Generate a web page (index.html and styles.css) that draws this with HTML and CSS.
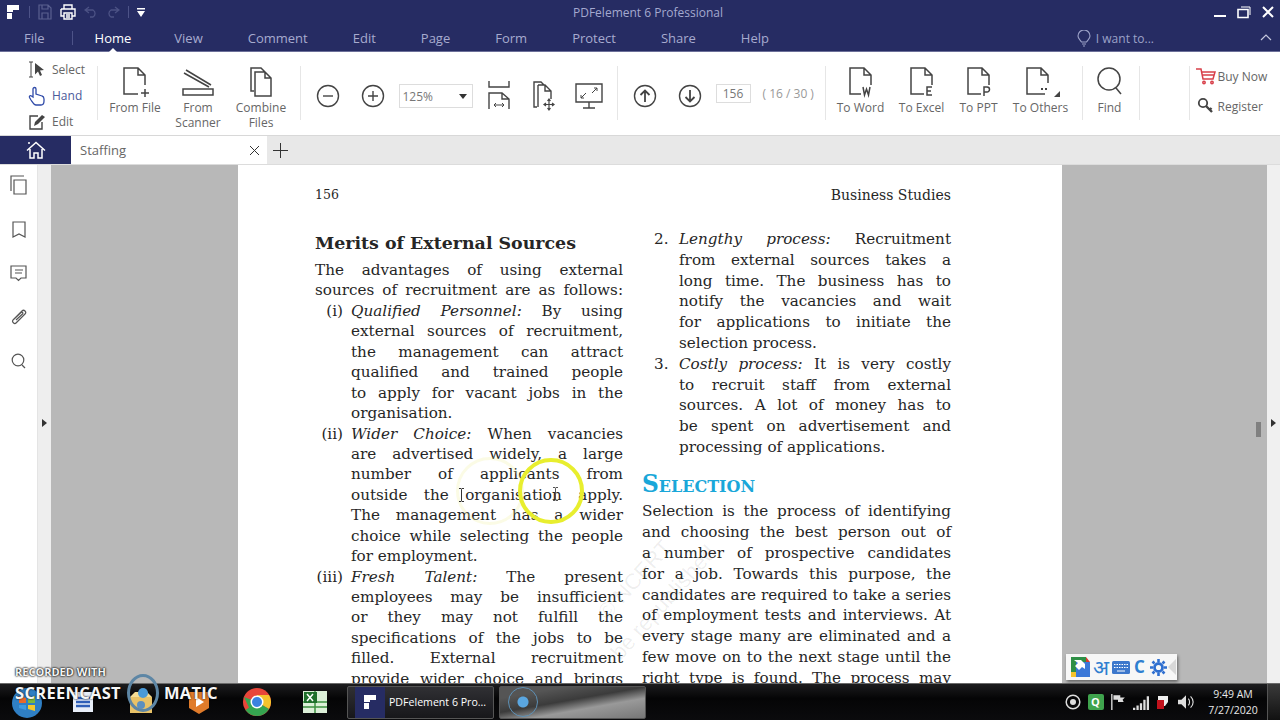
FILE: index.html
```html
<!DOCTYPE html>
<html lang="en">
<head>
<meta charset="utf-8">
<title>PDFelement 6 Professional</title>
<link rel="stylesheet" href="styles.css">
</head>
<body>
<div class="app">
  <header class="titlebar">
    <div class="qa">
      <svg class="qa-logo" width="12" height="14" viewBox="0 0 12 14"><path fill="#fff" d="M0 0h12v5H6v2H0zM0 8h5v6H0z"/></svg>
      <span class="qa-sep"></span>
      <svg class="qa-i" width="14" height="16" viewBox="0 0 14 16" fill="none" stroke="#5a6090" stroke-width="1.2"><path d="M1 1h9l3 3v11H1zM4 1v4h6V1M4 15v-6h6v6"/></svg>
      <svg class="qa-i" width="16" height="16" viewBox="0 0 16 16" fill="none" stroke="#fff" stroke-width="1.4"><path d="M4 5V1h8v4M1 5h14v7h-3M4 12H1V5M4 9h8v6H4zM6 11h4M6 13h4"/></svg>
      <svg class="qa-i" width="14" height="12" viewBox="0 0 14 12" fill="none" stroke="#4c5285" stroke-width="1.3"><path d="M5 1 1 4l4 3M1 4h8a4 4 0 0 1 0 7H6"/></svg>
      <svg class="qa-i" width="14" height="12" viewBox="0 0 14 12" fill="none" stroke="#4c5285" stroke-width="1.3"><path d="m9 1 4 3-4 3M13 4H5a4 4 0 0 0 0 7h3"/></svg>
      <span class="qa-sep"></span>
      <svg class="qa-i" width="8" height="9" viewBox="0 0 8 9"><path fill="#fff" d="M0 0h8v1.500H0zM0 3h8L4 9z"/></svg>
    </div>
    <div class="app-title">PDFelement 6 Professional</div>
    <div class="win">
      <svg width="12" height="12" viewBox="0 0 12 12"><path stroke="#fff" stroke-width="2" d="M0 10h12"/></svg>
      <svg width="14" height="14" viewBox="0 0 14 14" fill="none" stroke="#fff"><path stroke-width="1.600" d="M1 4.500h10v8H1z"/><path d="M4 2h9v8"/></svg>
      <svg width="12" height="12" viewBox="0 0 12 12"><path stroke="#fff" stroke-width="2" d="m1 1 10 10M11 1 1 11"/></svg>
    </div>
  </header>
  <nav class="menubar">
    <a class="m">File</a><span class="m-sep"></span>
    <a class="m m-on">Home</a><a class="m">View</a><a class="m">Comment</a><a class="m">Edit</a><a class="m">Page</a><a class="m">Form</a><a class="m">Protect</a><a class="m">Share</a><a class="m">Help</a>
    <div class="want">
      <svg width="14" height="17" viewBox="0 0 14 17" fill="none" stroke="#9ca2c8" stroke-width="1.100"><path d="M4.500 12C3 9.500 1 8.500 1 6a6 6 0 0 1 12 0c0 2.500-2 3.500-3.500 6zM5 14h4M6 16h2"/></svg>
      <span>I want to...</span>
    </div>
    <svg class="chev" width="12" height="7" viewBox="0 0 12 7" fill="none" stroke="#c5c8de" stroke-width="1.200"><path d="m1 6 5-5 5 5"/></svg>
  </nav>

  <section class="ribbon">
    <div class="tools">
      <div class="tool"><svg width="18" height="18" viewBox="0 0 18 18"><path fill="none" stroke="#444" d="M1 1h4M3 1v15M1 16h4"/><path fill="#444" d="m7 2 9 7-4 .5 2 4.500-2 1-2-4.500-3 3z"/></svg><span>Select</span></div>
      <div class="tool tool-on"><svg width="18" height="20" viewBox="0 0 18 20" fill="none" stroke="#2f4aa8" stroke-width="1.300"><path d="M5 11V3a1.500 1.500 0 0 1 3 0v5l6 2c2 .5 2 2 2 3v2c0 2-1 4-3 4H8c-2 0-3-2-5-5l-1.500-2.500c-.5-1.500 1-2.500 2-1.500z"/></svg><span>Hand</span></div>
      <div class="tool"><svg width="18" height="18" viewBox="0 0 18 18" fill="none" stroke="#444" stroke-width="1.400"><path d="M14 9v7H2V3h8"/><path fill="#444" stroke="none" d="m6 13 1-4 7-7 3 2-7 7z"/></svg><span>Edit</span></div>
    </div>
    <span class="sep"></span>
    <div class="grp grp-files">
      <div class="big w63"><svg width="28" height="32" viewBox="0 0 28 32" fill="none" stroke="#444" stroke-width="1.500"><path d="M17 28H3V2h14l7 7v10M17 2v7h7M20 27h8M24 23v8"/></svg><span>From File</span></div>
      <div class="big w63"><svg width="34" height="32" viewBox="0 0 34 32" fill="none" stroke="#444" stroke-width="1.500"><path d="m5 4 25 15M3 7l25 14M2 23h30v6H2z"/></svg><span>From Scanner</span></div>
      <div class="big w63"><svg width="24" height="32" viewBox="0 0 24 32" fill="none" stroke="#444" stroke-width="1.500"><path d="M5 25H2V2h10l4 4M6 6h10l6 6v18H6zM16 6v6h6"/></svg><span>Combine Files</span></div>
    </div>
    <span class="sep"></span>
    <div class="grp grp-view">
      <div class="ib"><svg width="24" height="24" viewBox="0 0 24 24" fill="none" stroke="#444" stroke-width="1.400"><circle cx="12" cy="12" r="10.500"/><path d="M7 12h10"/></svg></div>
      <div class="ib"><svg width="24" height="24" viewBox="0 0 24 24" fill="none" stroke="#444" stroke-width="1.400"><circle cx="12" cy="12" r="10.500"/><path d="M7 12h10M12 7v10"/></svg></div>
      <div class="zoomsel"><span>125%</span><i class="caret"></i></div>
      <div class="ib"><svg width="24" height="30" viewBox="0 0 24 30" fill="none" stroke="#444" stroke-width="1.400"><path d="M2 0v6h20V0M2 28V12h13l7 6v10M15 12v6h7"/><path stroke-width="1" d="M7 24h10M9 22l-2 2 2 2M15 22l2 2-2 2"/></svg></div>
      <div class="ib"><svg width="24" height="30" viewBox="0 0 24 30" fill="none" stroke="#444" stroke-width="1.400"><path d="M5 26H2V1h7l3 3M6 4h7l6 6v8M6 4v22M13 4v6h6"/><path stroke-width="1.200" d="M17 18v11M11.500 23.500h11M15.500 20l1.500-2 1.500 2M15.500 27l1.500 2 1.500-2M14 22l-2 1.500 2 1.500M20 22l2 1.500-2 1.500"/></svg></div>
      <div class="ib"><svg width="28" height="28" viewBox="0 0 28 28" fill="none" stroke="#444" stroke-width="1.400"><path d="M1 2h26v18H1zM14 20v6M8 26h12"/><path stroke-width="1" d="m6 16 5-5M6 13v3h3M22 6l-5 5M19 6h3v3"/></svg></div>
    </div>
    <span class="sep"></span>
    <div class="grp grp-nav">
      <div class="ib"><svg width="24" height="24" viewBox="0 0 24 24" fill="none" stroke="#444" stroke-width="1.400"><circle cx="12" cy="12" r="10.500"/><path stroke-width="1.800" d="M12 18V7M7.500 11 12 6.500l4.500 4.500"/></svg></div>
      <div class="ib"><svg width="24" height="24" viewBox="0 0 24 24" fill="none" stroke="#444" stroke-width="1.400"><circle cx="12" cy="12" r="10.500"/><path stroke-width="1.800" d="M12 6v11M7.500 13l4.500 4.500 4.500-4.500"/></svg></div>
      <div class="pageinp">156</div>
      <div class="pagecount">( 16 / 30 )</div>
    </div>
    <span class="sep"></span>
    <div class="grp grp-conv">
      <div class="big w68"><svg width="28" height="32" viewBox="0 0 28 32" fill="none" stroke="#444" stroke-width="1.500"><path d="M14 28H3V2h14l7 7v10M17 2v7h7"/><path stroke-width="1.500" d="m16 21 1.500 8 2-6 2 6 1.500-8"/></svg><span>To Word</span></div>
      <div class="big w54"><svg width="28" height="32" viewBox="0 0 28 32" fill="none" stroke="#444" stroke-width="1.500"><path d="M16 28H3V2h14l7 7v10M17 2v7h7"/><path stroke-width="1.500" d="M24 21h-5v8h5M19 25h4"/></svg><span>To Excel</span></div>
      <div class="big w60"><svg width="28" height="32" viewBox="0 0 28 32" fill="none" stroke="#444" stroke-width="1.500"><path d="M16 28H3V2h14l7 7v10M17 2v7h7"/><path stroke-width="1.500" d="M19 30v-9h3a2.500 2.500 0 0 1 0 5h-3"/></svg><span>To PPT</span></div>
      <div class="big w64"><svg width="40" height="32" viewBox="0 0 40 32" fill="none" stroke="#444" stroke-width="1.500"><path d="M24 28H6V2h14l7 7v8M20 2v7h7"/><path stroke-width="2" stroke-dasharray="2 2" d="M20 23h8"/><path fill="#444" stroke="none" d="M39 25v6h-6z"/></svg><span>To Others</span></div>
    </div>
    <span class="sep"></span>
    <div class="big w54 find"><svg width="28" height="32" viewBox="0 0 28 32" fill="none" stroke="#444" stroke-width="1.500"><circle cx="13" cy="13" r="11"/><path d="m20 22 5 6"/></svg><span>Find</span></div>
    <span class="sep sep-find"></span>
    <span class="sep sep-buy"></span>
    <div class="buy">
      <div class="buy-row"><svg width="20" height="17" viewBox="0 0 20 17" fill="none" stroke="#d8404a" stroke-width="1.500"><path d="M0 1h5l2 10h10l2-7H6M6 7h12"/><circle cx="8" cy="14.500" r="1.200"/><circle cx="16" cy="14.500" r="1.200"/></svg><span>Buy Now</span></div>
      <div class="buy-row"><svg width="18" height="18" viewBox="0 0 18 18" fill="none" stroke="#444" stroke-width="1.800"><circle cx="6" cy="6" r="4.200"/><path stroke-width="2.400" d="m9 9 6 6M12.500 13l2-2"/></svg><span>Register</span></div>
    </div>
  </section>

  <div class="tabbar">
    <div class="hometab"><svg width="20" height="18" viewBox="0 0 20 18" fill="none" stroke="#fff" stroke-width="1.500"><path d="M1 9.500 10 1.500l9 8M4 8v9h4v-5h4v5h4V8M3 1v2"/></svg></div>
    <div class="doctab"><span>Staffing</span><svg width="11" height="11" viewBox="0 0 11 11" stroke="#333"><path d="m1 1 9 9M10 1l-9 9"/></svg></div>
    <svg class="addtab" width="15" height="15" viewBox="0 0 15 15" stroke="#333"><path d="M0 7.500h15M7.500 0v15"/></svg>
  </div>

  <main class="workspace">
    <aside class="side">
      <svg width="18" height="20" viewBox="0 0 18 20" fill="none" stroke="#555" stroke-width="1.200"><path d="M14 1H1v15M4 5h12v14H4z"/></svg>
      <svg width="16" height="18" viewBox="0 0 16 18" fill="none" stroke="#555" stroke-width="1.200"><path d="M2 1h12v15l-6-3-6 3z"/></svg>
      <svg width="18" height="18" viewBox="0 0 18 18" fill="none" stroke="#555" stroke-width="1.200"><path d="M1 1h15v12h-5l-2.500 2.500L6 13H1zM5 5h8M5 8h7"/></svg>
      <svg width="18" height="18" viewBox="0 0 18 18" fill="none" stroke="#555" stroke-width="1.200"><path d="M3 11 12 2c2-2 5 1 3 3l-9 9c-1.500 1.500-4.500-1-3-3l8-7.500c1-1 2.500.5 1.500 1.500L6 11"/></svg>
      <svg width="16" height="16" viewBox="0 0 16 16" fill="none" stroke="#555" stroke-width="1.200"><circle cx="7" cy="7" r="5.800"/><path d="m11 12 3 3"/></svg>
    </aside>
    <div class="gutter"><i class="arrow"></i></div>
    <div class="canvas">
      <article class="page">
        <div class="page-head"><span class="pno">156</span><span>Business Studies</span></div>
        <div class="cols">
          <div class="col col-l">
            <h2 class="h-merits">Merits of External Sources</h2>
            <p class="ln">The advantages of using external</p>
            <p class="ln">sources of recruitment are as follows:</p>
            <div class="item">
              <span class="lab">(i)</span>
              <div class="body">
                <p class="ln"><em>Qualified Personnel:</em> By using</p>
                <p class="ln">external sources of recruitment,</p>
                <p class="ln">the management can attract</p>
                <p class="ln">qualified and trained people</p>
                <p class="ln">to apply for vacant jobs in the</p>
                <p class="ln end">organisation.</p>
              </div>
            </div>
            <div class="item">
              <span class="lab">(ii)</span>
              <div class="body">
                <p class="ln"><em>Wider Choice:</em> When vacancies</p>
                <p class="ln">are advertised widely, a large</p>
                <p class="ln">number of applicants from</p>
                <p class="ln">outside the organisation apply.</p>
                <p class="ln">The management has a wider</p>
                <p class="ln">choice while selecting the people</p>
                <p class="ln end">for employment.</p>
              </div>
            </div>
            <div class="item">
              <span class="lab">(iii)</span>
              <div class="body">
                <p class="ln"><em>Fresh Talent:</em> The present</p>
                <p class="ln">employees may be insufficient</p>
                <p class="ln">or they may not fulfill the</p>
                <p class="ln">specifications of the jobs to be</p>
                <p class="ln">filled. External recruitment</p>
                <p class="ln">provide wider choice and brings</p>
              </div>
            </div>
          </div>
          <div class="col col-r">
            <div class="item item-r">
              <span class="lab">2.</span>
              <div class="body">
                <p class="ln"><em>Lengthy process:</em> Recruitment</p>
                <p class="ln">from external sources takes a</p>
                <p class="ln">long time. The business has to</p>
                <p class="ln">notify the vacancies and wait</p>
                <p class="ln">for applications to initiate the</p>
                <p class="ln end">selection process.</p>
              </div>
            </div>
            <div class="item item-r">
              <span class="lab">3.</span>
              <div class="body">
                <p class="ln"><em>Costly process:</em> It is very costly</p>
                <p class="ln">to recruit staff from external</p>
                <p class="ln">sources. A lot of money has to</p>
                <p class="ln">be spent on advertisement and</p>
                <p class="ln end">processing of applications.</p>
              </div>
            </div>
            <h2 class="h-sel">Selection</h2>
            <p class="ln">Selection is the process of identifying</p>
            <p class="ln">and choosing the best person out of</p>
            <p class="ln">a number of prospective candidates</p>
            <p class="ln">for a job. Towards this purpose, the</p>
            <p class="ln">candidates are required to take a series</p>
            <p class="ln">of employment tests and interviews. At</p>
            <p class="ln">every stage many are eliminated and a</p>
            <p class="ln">few move on to the next stage until the</p>
            <p class="ln">right type is found. The process may</p>
          </div>
        </div>
        <div class="wm wm-a">© NCERT</div>
        <div class="wm wm-b">be republished</div>
        <div class="ring-ghost"></div>
        <div class="ring"></div>
        <svg class="ibeam ibeam-a" width="7" height="14" viewBox="0 0 7 14" fill="none" stroke="#333"><path d="M1 .5h2l.5 1 .5-1h2M3.500 1.500v11M1 13.500h2l.5-1 .5 1h2"/></svg>
        <svg class="ibeam ibeam-b" width="7" height="14" viewBox="0 0 7 14" fill="none" stroke="#555"><path d="M1 .5h2l.5 1 .5-1h2M3.500 1.500v11M1 13.500h2l.5-1 .5 1h2"/></svg>
      </article>
      <i class="thumb"></i>
    </div>
    <div class="gutter gutter-r"><i class="arrow"></i></div>
  </main>

  <footer class="taskbar">
    <div class="tb-orb"><svg width="32" height="32" viewBox="0 0 32 32"><circle cx="16" cy="16" r="15" fill="#2f7fc4"/><path fill="#e9692c" d="M8 9l7 2v5H8z"/><path fill="#7db93c" d="m17 11 7-2v7h-7z"/><path fill="#3f9be0" d="M8 18h7v5l-7-2z"/><path fill="#f5c92c" d="M17 18h7v6l-7-2z"/></svg></div>
    <div class="tb-ic"><svg width="26" height="26" viewBox="0 0 26 26"><path fill="#e8eef8" d="M3 3h20v20H3z"/><path stroke="#2f5fb8" stroke-width="2.500" d="M6 9h14M6 13h14M6 17h14"/></svg></div>
    <div class="tb-ic"><svg width="28" height="26" viewBox="0 0 28 26"><path fill="#e8c268" d="M3 8h22v16H3z"/><path fill="#f6dd94" d="M3 8 8 3h12l5 5z"/><circle cx="14" cy="16" r="4" fill="#5b8fc0"/></svg></div>
    <div class="tb-ic"><svg width="24" height="26" viewBox="0 0 24 26"><path fill="#e07b2a" d="M2 3h20v16l-10 6L2 19z"/><path fill="#fff" d="m9 8 8 5-8 5z"/></svg></div>
    <div class="tb-ic"><svg width="28" height="28" viewBox="0 0 28 28"><circle cx="14" cy="14" r="14" fill="#e8463a"/><path fill="#f5c32c" d="M14 14 26 21a14 14 0 0 0 0-14H14z"/><path fill="#35a550" d="M14 14 26 21A14 14 0 0 1 2.500 22z"/><path fill="#35a550" d="M14 14 8 24 1 9z"/><circle cx="14" cy="14" r="6.500" fill="#fff"/><circle cx="14" cy="14" r="5" fill="#3b82e0"/></svg></div>
    <div class="tb-ic"><svg width="28" height="26" viewBox="0 0 28 26"><path fill="#dcefd8" d="M2 2h24v22H2z"/><path stroke="#3d9140" stroke-width="1.500" d="M14 2v22M2 13h24M2 18h24"/><path fill="#1f6f2b" d="M3 3h13v11H3z"/><path stroke="#fff" stroke-width="1.500" d="m6 5 6 7M12 5l-6 7"/></svg></div>
    <div class="tb-btn tb-btn-a"><div class="tb-app"><svg width="12" height="14" viewBox="0 0 12 14"><path fill="#fff" d="M0 0h12v5H6v2H0zM0 8h5v6H0z"/></svg></div><span>PDFelement 6 Pro...</span></div>
    <div class="tb-btn tb-btn-b"><div class="spin"></div></div>
    <div class="tray">
      <svg viewBox="0 0 16 16" fill="none" stroke="#ddd" stroke-width="1.500"><circle cx="8" cy="8" r="6.800"/><circle cx="8" cy="8" r="3" fill="#ddd" stroke="none"/></svg>
      <div class="q">Q</div>
      <svg viewBox="0 0 14 14" fill="#ddd"><path d="M1 0h1.200v14H1zM3 1h6v2h4l-2 2 1 2H7V5H3z"/></svg>
      <svg viewBox="0 0 14 14" fill="#ddd"><path d="M0 12h2v2H0zM3 10h2v4H3zM6 8h2v6H6zM9 5h2v9H9zM12 2h2v12h-2z"/></svg>
      <svg viewBox="0 0 14 16"><path fill="#eee" d="M2 2h10v6l-3 4H4L2 9z"/><path fill="#c1121c" d="M1 6h7v9H1z"/></svg>
      <svg viewBox="0 0 14 14" fill="#ddd"><path d="M0 5h3l4-4v12l-4-4H0z"/><path fill="none" stroke="#ddd" d="M9 4c1.500 1.500 1.500 4.500 0 6M11 2c3 3 3 7 0 10"/></svg>
    </div>
    <div class="clock"><span>9:49 AM</span><span>7/27/2020</span></div>
    <div class="showdesk"></div>
  </footer>

  <div class="rec">RECORDED WITH</div>
  <div class="sc"><span>SCREENCAST</span><span class="sc-ring"><i></i></span><span>MATIC</span></div>
  <div class="ime">
    <svg width="19" height="20" viewBox="0 0 19 20"><path fill="#2f8f46" d="M0 0h15v5H5v10H0z"/><path fill="#d8392f" d="m15 0 4 5h-4z"/><path fill="#f5c32c" d="M0 15h5v5H0z"/><path fill="#3b78d8" d="M5 5h14v15H5z"/><path fill="#fff" d="M3 3h7l4 4v5l-3-2-3 3-4-4 3-3z"/></svg>
    <span class="ime-a">अ</span>
    <svg width="18" height="13" viewBox="0 0 18 13"><rect width="18" height="13" rx="1.500" fill="#3d78cc"/><path stroke="#fff" stroke-dasharray="1.500 1" d="M2 3.500h14M2 6.500h14"/><path stroke="#fff" d="M5 10h8"/></svg>
    <span class="ime-c">C</span>
    <svg width="17" height="17" viewBox="0 0 17 17" fill="none" stroke="#2f6fd0"><circle cx="8.500" cy="8.500" r="4" stroke-width="2.800"/><path stroke-width="2.600" d="M8.500 0v3M8.500 14v3M0 8.500h3M14 8.500h3M2.500 2.500l2 2M12.500 12.500l2 2M14.500 2.500l-2 2M4.500 12.500l-2 2"/></svg>
    <i class="ime-tip"></i>
  </div>
</div>
</body>
</html>
```
FILE: styles.css
```css
* { box-sizing: border-box; }
html, body { margin: 0; height: 100%; overflow: hidden; }
.app { position: relative; width: 1280px; height: 720px; display: flex; flex-direction: column; overflow: hidden; font-family: "Open Sans", "Noto Sans", sans-serif; color: #666; background: #fff; }

/* title bar */
.titlebar { height: 26px; background: #262c63; display: flex; align-items: center; flex: none; padding-bottom: 2px; }
.qa { width: 573px; display: flex; align-items: center; padding-left: 7px; }
.qa-logo { margin-right: 10px; }
.qa-sep { width: 1px; height: 12px; background: #4d5388; margin-right: 8px; }
.qa-i { margin-right: 8px; }
.app-title { font-size: 12px; color: #a4a9cf; white-space: nowrap; }
.win { margin-left: auto; display: flex; align-items: center; gap: 11px; padding-right: 6px; }

/* menu */
.menubar { height: 26px; background: #262c63; border-bottom: 1px solid #6c7099; display: flex; align-items: center; flex: none; padding: 0 0 2px 24px; position: relative; }
.m { font-size: 13px; color: #a7abcf; margin-right: 45px; }
.m-sep { width: 1px; height: 14px; background: #4d5388; margin: 0 22px 0 -18px; }
.m-on { color: #fff; position: relative; margin-right: 43px; }
.m-on::after { content: ""; position: absolute; left: 13px; bottom: -6px; border: 5px solid transparent; border-top: 0; border-bottom-color: #fff; }
.want { margin-left: auto; display: flex; align-items: center; gap: 5px; font-size: 12px; color: #9ca2c8; position: relative; top: 1px; }
.chev { margin: 0 8px 0 106px; }

/* ribbon */
.ribbon { height: 83px; flex: none; display: flex; align-items: flex-start; background: #fff; font-size: 12px; color: #666; }
.sep { width: 1px; height: 54px; margin-top: 14px; background: #e6e6e6; flex: none; }
.sep-buy { margin-left: 49px; }
.tools { width: 97px; padding: 4.5px 0 0 28px; flex: none; }
.tool { height: 26px; display: flex; align-items: center; gap: 6px; }
.tool svg { flex: none; }
.tool-on { color: #4a5a9a; }
.grp { display: flex; align-items: flex-start; flex: none; }
.grp-files { padding: 0 7px 0 5.5px; }
.grp-view { padding: 0 5.500px 0 4.500px; }
.grp-nav { padding-left: 4.500px; }
.grp-conv { padding: 0 9px 0 1px; }
.big { display: flex; flex-direction: column; align-items: center; padding-top: 14px; text-align: center; line-height: 15px; flex: none; }
.big svg { height: 32px; margin-bottom: 1.5px; flex: none; }
.w63 { width: 63px; }
.w68 { width: 68px; }
.w64 { width: 64px; }
.w60 { width: 60px; }
.w54 { width: 54px; }
.find { margin-right: 2px; }
.ib { width: 45px; height: 32px; margin-top: 28px; display: flex; align-items: center; justify-content: center; flex: none; }
.zoomsel { width: 74px; height: 24px; margin: 32px 3.500px 0; border: 1px solid #ddd; display: flex; align-items: center; justify-content: space-between; padding: 0 5px 0 3px; color: #777; }
.caret { border: 4px solid transparent; border-bottom: 0; border-top: 5px solid #333; }
.pageinp { width: 35px; height: 19px; margin: 32px 0 0 3.500px; border: 1px solid #ddd; text-align: center; line-height: 17px; color: #777; }
.pagecount { width: 62px; margin: 32px 0 0 12px; line-height: 19px; color: #999; white-space: nowrap; }
.buy { padding: 9px 0 0 6px; }
.buy-row { height: 30px; display: flex; align-items: center; gap: 2px; white-space: nowrap; }
.buy-row svg { width: 20px; flex: none; }

/* tabs */
.tabbar { height: 30px; flex: none; background: #e8e8e8; border-top: 1px solid #d8d8d8; border-bottom: 1px solid #dcdcdc; display: flex; align-items: center; position: relative; }
.hometab { width: 71px; height: 28px; background: #262c63; display: flex; align-items: center; justify-content: center; }
.doctab { width: 196px; height: 28px; background: #fff; display: flex; align-items: center; justify-content: space-between; padding: 0 7px 0 9px; font-size: 13px; color: #666; }
.addtab { margin-left: 6px; }

/* workspace */
.workspace { flex: 1; min-height: 0; display: flex; background: #fff; }
.side { width: 38px; flex: none; display: flex; flex-direction: column; align-items: center; padding: 10px 0 0 1px; gap: 26px; background: #fff; border-right: 1px solid #e4e4e4; }
.gutter { width: 13px; flex: none; background: #eeeeee; position: relative; }
.gutter-r { background: #f0f0f0; }
.arrow { position: absolute; top: 254px; left: 4px; border: 4px solid transparent; border-right: 0; border-left: 5px solid #333; }
.canvas { flex: 1; min-width: 0; background: #b8b8b8; padding-left: 187px; position: relative; overflow: hidden; }
.thumb { position: absolute; right: 6px; top: 257px; width: 5px; height: 15px; background: #808080; }

/* PDF page */
.page { position: relative; width: 824px; height: 100%; background: #fff; padding: 20px 111px 0 77px; overflow: hidden; color: #262626; font-family: "DejaVu Serif", "Liberation Serif", serif; font-size: 15.2px; word-spacing: -2px; }
.page-head { display: flex; justify-content: space-between; height: 20px; line-height: 20px; font-size: 14px; margin-bottom: 24px; word-spacing: 0; }
.pno { font-size: 12.5px; }
.cols { display: flex; gap: 19px; }
.col { flex: none; }
.col-l { width: 308px; --lh: 20.45px; }
.col-r { width: 309px; --lh: 20.8px; }
.h-merits { margin: 0; height: 31px; line-height: 28px; font-size: 17.4px; font-weight: 700; white-space: nowrap; word-spacing: 0; }
.ln { margin: 0; height: var(--lh); line-height: var(--lh); text-align: justify; text-align-last: justify; white-space: nowrap; }
.end { text-align-last: left; word-spacing: 0; }
.item { display: flex; }
.lab { width: 28px; margin-right: 8px; text-align: right; flex: none; line-height: var(--lh); }
.body { width: 272px; flex: none; }
.item-r .lab { width: 37px; margin: 0; padding-left: 12px; text-align: left; }
.h-sel { margin: 12px 0 3.6px; height: 28px; line-height: 28px; color: #1aa7d9; font-size: 23.3px; font-weight: 700; font-variant: small-caps; }
.wm { position: absolute; font: 22px/26px "Liberation Sans", sans-serif; color: rgba(0,0,0,.07); transform: rotate(-48deg); transform-origin: 0 100%; white-space: nowrap; word-spacing: 0; }
.wm-a { left: 374px; top: 434px; }
.wm-b { left: 387px; top: 474px; }
.ring { position: absolute; left: 280px; top: 293px; width: 66px; height: 66px; border: 4px solid #e8ee2e; border-radius: 50%; }
.ring-ghost { position: absolute; left: 218px; top: 292px; width: 68px; height: 68px; border: 3px solid rgba(240,240,150,.25); border-radius: 50%; }
.ibeam { position: absolute; }
.ibeam-a { left: 220px; top: 323px; }
.ibeam-b { left: 314px; top: 322px; }

/* taskbar */
.taskbar { height: 37px; flex: none; display: flex; align-items: center; background: linear-gradient(#1c1c1e, #050506 40%, #0b0b0d); border-top: 1px solid #6a6a6a; position: relative; }
.tb-orb { width: 54px; display: flex; justify-content: center; padding-top: 2px; }
.tb-ic { width: 58px; display: flex; justify-content: center; }
.tb-btn { height: 33px; border: 1px solid #555; border-radius: 2px; flex: none; display: flex; align-items: center; }
.tb-btn-a { width: 147px; margin-left: 3px; padding-left: 7px; background: linear-gradient(#303034, #17171a); color: #fff; font-size: 10.6px; white-space: nowrap; }
.tb-btn-b { width: 147px; margin-left: 5px; padding-left: 8px; background: linear-gradient(170deg, #555 20%, #3b3b3b 45%, #999 65%, #777); }
.tb-app { width: 30px; height: 31px; background: #262c63; display: flex; align-items: center; justify-content: center; margin-right: 4px; flex: none; }
.spin { width: 30px; height: 30px; border: 1px solid #5d90b5; border-radius: 50%; background: radial-gradient(circle, #5aa6e0 0 5px, transparent 6px); }
.tray { margin-left: auto; display: flex; align-items: center; gap: 6.5px; width: 128px; color: #ddd; }
.tray > * { width: 16px; height: 16px; flex: none; }
.q { background: #3fa34d; color: #fff; border-radius: 2px; font: 700 11px/16px "Open Sans", sans-serif; text-align: center; }
.clock { width: 60px; display: flex; flex-direction: column; align-items: center; color: #e8e8e8; font-size: 10.5px; line-height: 16px; margin: 0 4px 0 10px; white-space: nowrap; }
.showdesk { width: 13px; height: 100%; border-left: 1px solid #555; background: linear-gradient(#3a3a3a, #111); }

/* recorder watermark + floating IME */
.rec { position: absolute; left: 15px; top: 666px; font: 700 11px/12px "Open Sans", sans-serif; color: #f4f4f4; text-shadow: 0 0 2px #000, 0 0 2px #000; white-space: nowrap; }
.sc { position: absolute; left: 15px; top: 680px; height: 26px; display: flex; align-items: center; font: 700 16.5px/26px "Open Sans", sans-serif; color: #f6f6f6; letter-spacing: .3px; text-shadow: 0 0 2px #000; white-space: nowrap; }
.sc-ring { width: 32px; height: 38px; margin: 0 5px 0 6px; border: 3px solid #5d86a5; border-radius: 50%; display: flex; align-items: center; justify-content: center; flex: none; }
.sc-ring i { width: 10px; height: 10px; border-radius: 50%; background: #4a9ad8; }
.ime { position: absolute; left: 1066px; top: 654px; width: 111px; height: 26px; background: #f7f7f7; box-shadow: 1px 2px 3px rgba(0,0,0,.45); display: flex; align-items: center; gap: 3px; padding-left: 5px; }
.ime-a { font: 400 21px/22px "Noto Sans", "Noto Sans CJK SC", sans-serif; color: #2f7fd0; width: 16px; }
.ime-c { font: 700 17px/20px "Open Sans", sans-serif; color: #2f7fd0; margin: 0 2px 0 1px; }
.ime-tip { position: absolute; right: 1px; top: 5px; border: 8px solid transparent; border-left: 0; border-right: 8px solid #d8d8d8; }
```
